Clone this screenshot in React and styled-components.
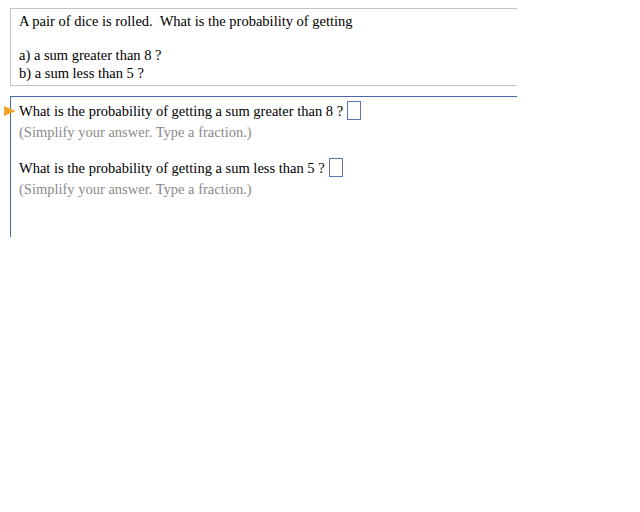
import React from 'react';
import styled, { createGlobalStyle } from 'styled-components';

const GlobalStyle = createGlobalStyle`
	html, body {
		margin: 0;
		padding: 0;
		background: #ffffff;
	}
	body {
		font-family: "Liberation Serif", "Times New Roman", serif;
		font-size: 14.5px;
		color: #000000;
	}
`;

const App = () => {
	return (
		<>
			<GlobalStyle />
			<Page>
				<QuestionBox>
					<Line>A pair of dice is rolled.&nbsp; What is the probability of getting</Line>
					<Gap />
					<Line>a) a sum greater than 8 ?</Line>
					<Line>b) a sum less than 5 ?</Line>
				</QuestionBox>
				<AnswerPanel>
					<Part>
						<Pointer />
						<Line>
							What is the probability of getting a sum greater than 8 ? <AnswerBox />
						</Line>
						<Hint>(Simplify your answer. Type a fraction.)</Hint>
					</Part>
					<Part>
						<Line>
							What is the probability of getting a sum less than 5 ? <AnswerBox />
						</Line>
						<Hint>(Simplify your answer. Type a fraction.)</Hint>
					</Part>
				</AnswerPanel>
			</Page>
		</>
	);
};

const Page = styled.div`
	display: flex;
	flex-direction: column;
	gap: 10px;
	width: 507px;
	padding: 8px 0 0 10px;
`;

const QuestionBox = styled.section`
	box-sizing: border-box;
	height: 78px;
	padding: 3px 0 0 8px;
	border-top: 1px solid #c4c4c4;
	border-bottom: 1px solid #c4c4c4;
	border-left: 1px solid #c4c4c4;
`;

const Line = styled.div`
	line-height: 18px;
	white-space: nowrap;
	display: flex;
	align-items: center;
	gap: 4px;
`;

const Gap = styled.div`
	height: 16px;
`;

const AnswerPanel = styled.section`
	display: flex;
	flex-direction: column;
	gap: 17px;
	height: 141px;
	box-sizing: border-box;
	padding: 4px 0 0 8px;
	border-top: 1px solid #4a67a6;
	border-left: 1px solid #4a67a6;
`;

const Part = styled.div`
	position: relative;
	display: flex;
	flex-direction: column;
	gap: 3px;
`;

const Pointer = styled.span`
	position: absolute;
	left: -15px;
	top: 5px;
	width: 0;
	height: 0;
	border-top: 5px solid transparent;
	border-bottom: 5px solid transparent;
	border-left: 12px solid #f4a62a;
`;

const AnswerBox = styled.span`
	display: inline-block;
	width: 12px;
	height: 17px;
	border: 1px solid #5a76b0;
	background: #ffffff;
`;

const Hint = styled.div`
	line-height: 18px;
	color: #8a8a8a;
	white-space: nowrap;
`;

export default App;
